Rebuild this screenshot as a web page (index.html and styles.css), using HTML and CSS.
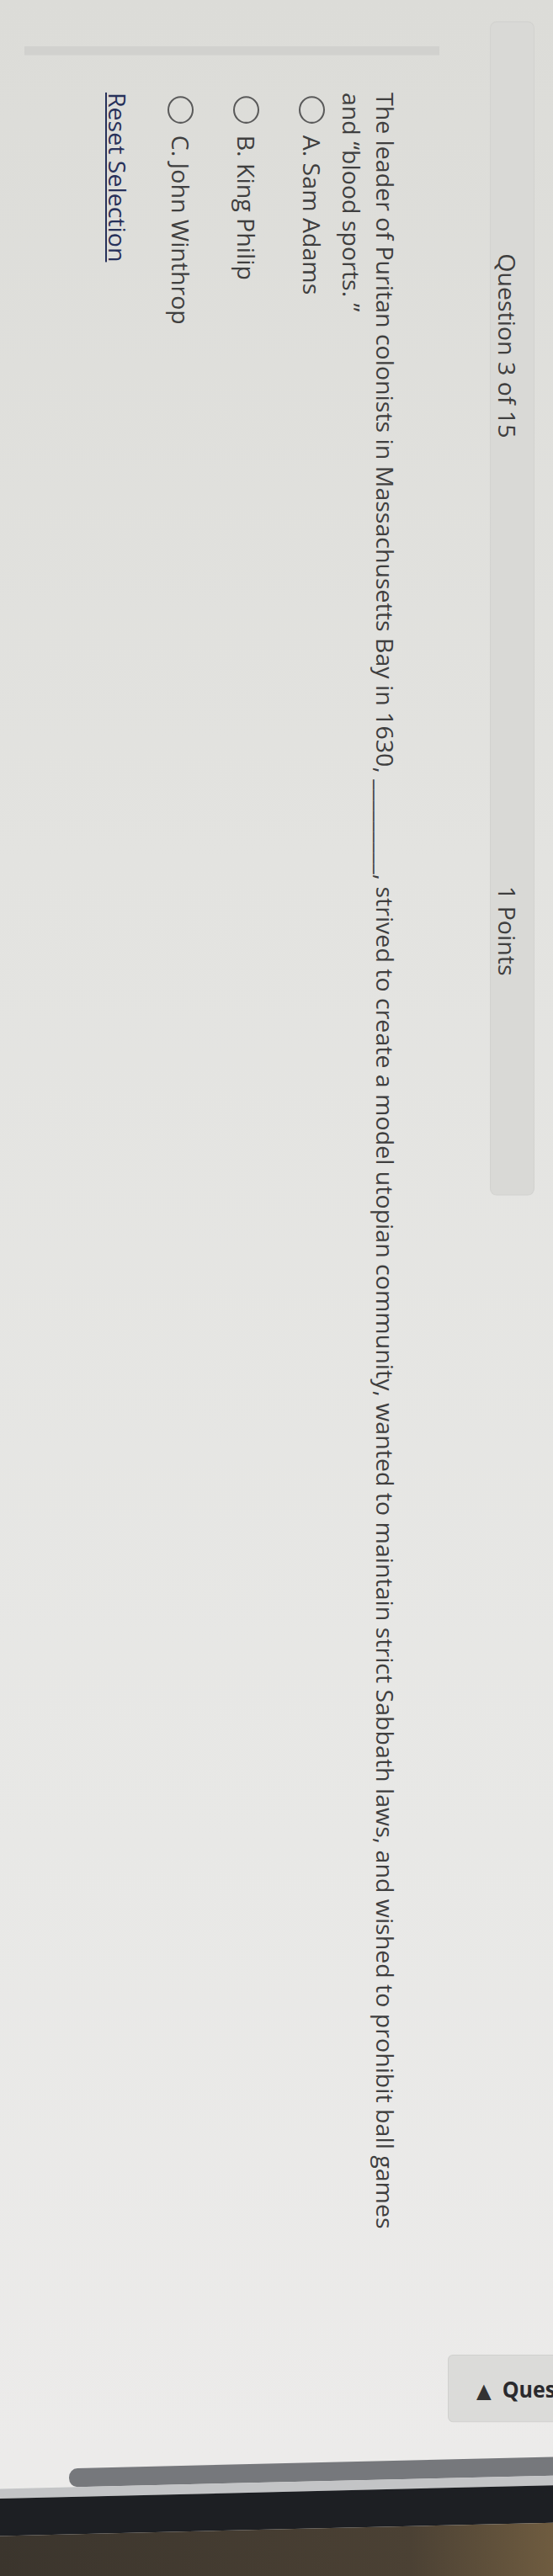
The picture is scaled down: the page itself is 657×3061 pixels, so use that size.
FILE: index.html
```html
<!DOCTYPE html>
<html><head><meta charset="UTF-8">
<title>Quiz</title>
<link rel="stylesheet" href="styles.css">
</head>
<body>
<div class="screen">
  <div class="page">
    <div class="quiz">
      <div class="q-head"><span>Question 3 of 15</span><span>1 Points</span></div>
      <div class="q-body">
        <div class="rail"></div>
        <div class="q-main">
          <p class="q-text">The leader of Puritan colonists in Massachusetts Bay in 1630, _________, strived to create a model utopian community, wanted to maintain strict Sabbath laws, and wished to prohibit ball games and “blood sports. ”</p>
          <ul class="choices">
            <li><span class="radio"></span>A. Sam Adams</li>
            <li><span class="radio"></span>B. King Philip</li>
            <li><span class="radio"></span>C. John Winthrop</li>
          </ul>
          <a class="reset" href="#">Reset Selection</a>
        </div>
      </div>
    </div>
    <div class="tab"><span class="tab-label"><span class="arrow">▲</span>Questions</span></div>
  </div>
  <div class="edge">
    <div class="track"><div class="thumb"></div></div>
    <div class="lip"></div>
    <div class="bezel"></div>
    <div class="desk"></div>
  </div>
</div>
</body>
</html>
```

FILE: styles.css
```css
html,body{margin:0;padding:0;}
body{width:657px;height:3061px;overflow:hidden;background:#e4e4e1;font-family:"Open Sans",sans-serif;}

/* the monitor is photographed on its side: lay it out landscape, then turn it */
.screen{display:flex;width:2896px;height:657px;background:#ecebea;transform-origin:0 0;transform:translateX(657px) rotate(90deg) scaleX(1.057);}

.page{position:relative;flex:0 0 2762px;background:linear-gradient(to right,#dcdcd8 0,#e3e3e0 35%,#e8e8e6 75%,#ecebea 100%);}
.quiz{padding:22px 0 0 24px;color:#3f3f3f;}

.q-head{display:flex;justify-content:space-between;box-sizing:border-box;width:1320px;height:53px;padding:12px 246px 0 260px;font-size:27px;line-height:40px;background:#d9d9d6;border:1px solid #d2d2cf;border-radius:8px;}

.q-body{display:flex;margin-top:60px;}
.rail{flex:0 0 10px;height:493px;margin-left:28px;background:#d1d1ce;}
.q-main{margin-left:42px;padding-top:45px;}

.q-text{width:2425px;margin:0;font-size:27px;line-height:40px;}

.choices{list-style:none;margin:6px 0 0;padding:0;}
.choices li{display:flex;align-items:center;height:40px;margin-left:4px;font-size:27px;}
.choices li+li{margin-top:38px;}
.radio{flex:0 0 31px;height:31px;box-sizing:border-box;margin-right:13px;border:2px solid #5a5a5a;border-radius:50%;}

.reset{display:inline-block;margin-top:36px;font-size:27px;line-height:40px;color:#27315a;text-decoration:underline;}

.tab{position:absolute;left:2647px;top:-20px;width:76px;height:145px;box-sizing:border-box;background:#dbdbd9;border:1px solid #d1d1cf;border-radius:0 0 6px 6px;}
.tab-label{position:absolute;left:19px;top:110px;height:36px;line-height:36px;white-space:nowrap;font-size:25px;font-weight:bold;color:#2a2a2e;transform-origin:0 0;transform:rotate(-90deg);}
.arrow{margin-right:13px;font-family:"DejaVu Sans",sans-serif;font-size:23px;color:#333;}

/* scrollbar and the bottom of the monitor frame, a little out of square */
.edge{display:flex;flex:1;transform-origin:0 0;transform:skewX(1.3deg);}
.track{flex:0 0 21px;}
.thumb{height:575px;background:#76787c;border-radius:0 0 10px 10px;}
.lip{flex:0 0 11px;background:#c3c4c6;}
.bezel{flex:0 0 42px;background:#1d1f23;}
.desk{flex:1;background:linear-gradient(to bottom,#6f5c40 0,#4b4134 170px,#3b352d 100%);}
```
